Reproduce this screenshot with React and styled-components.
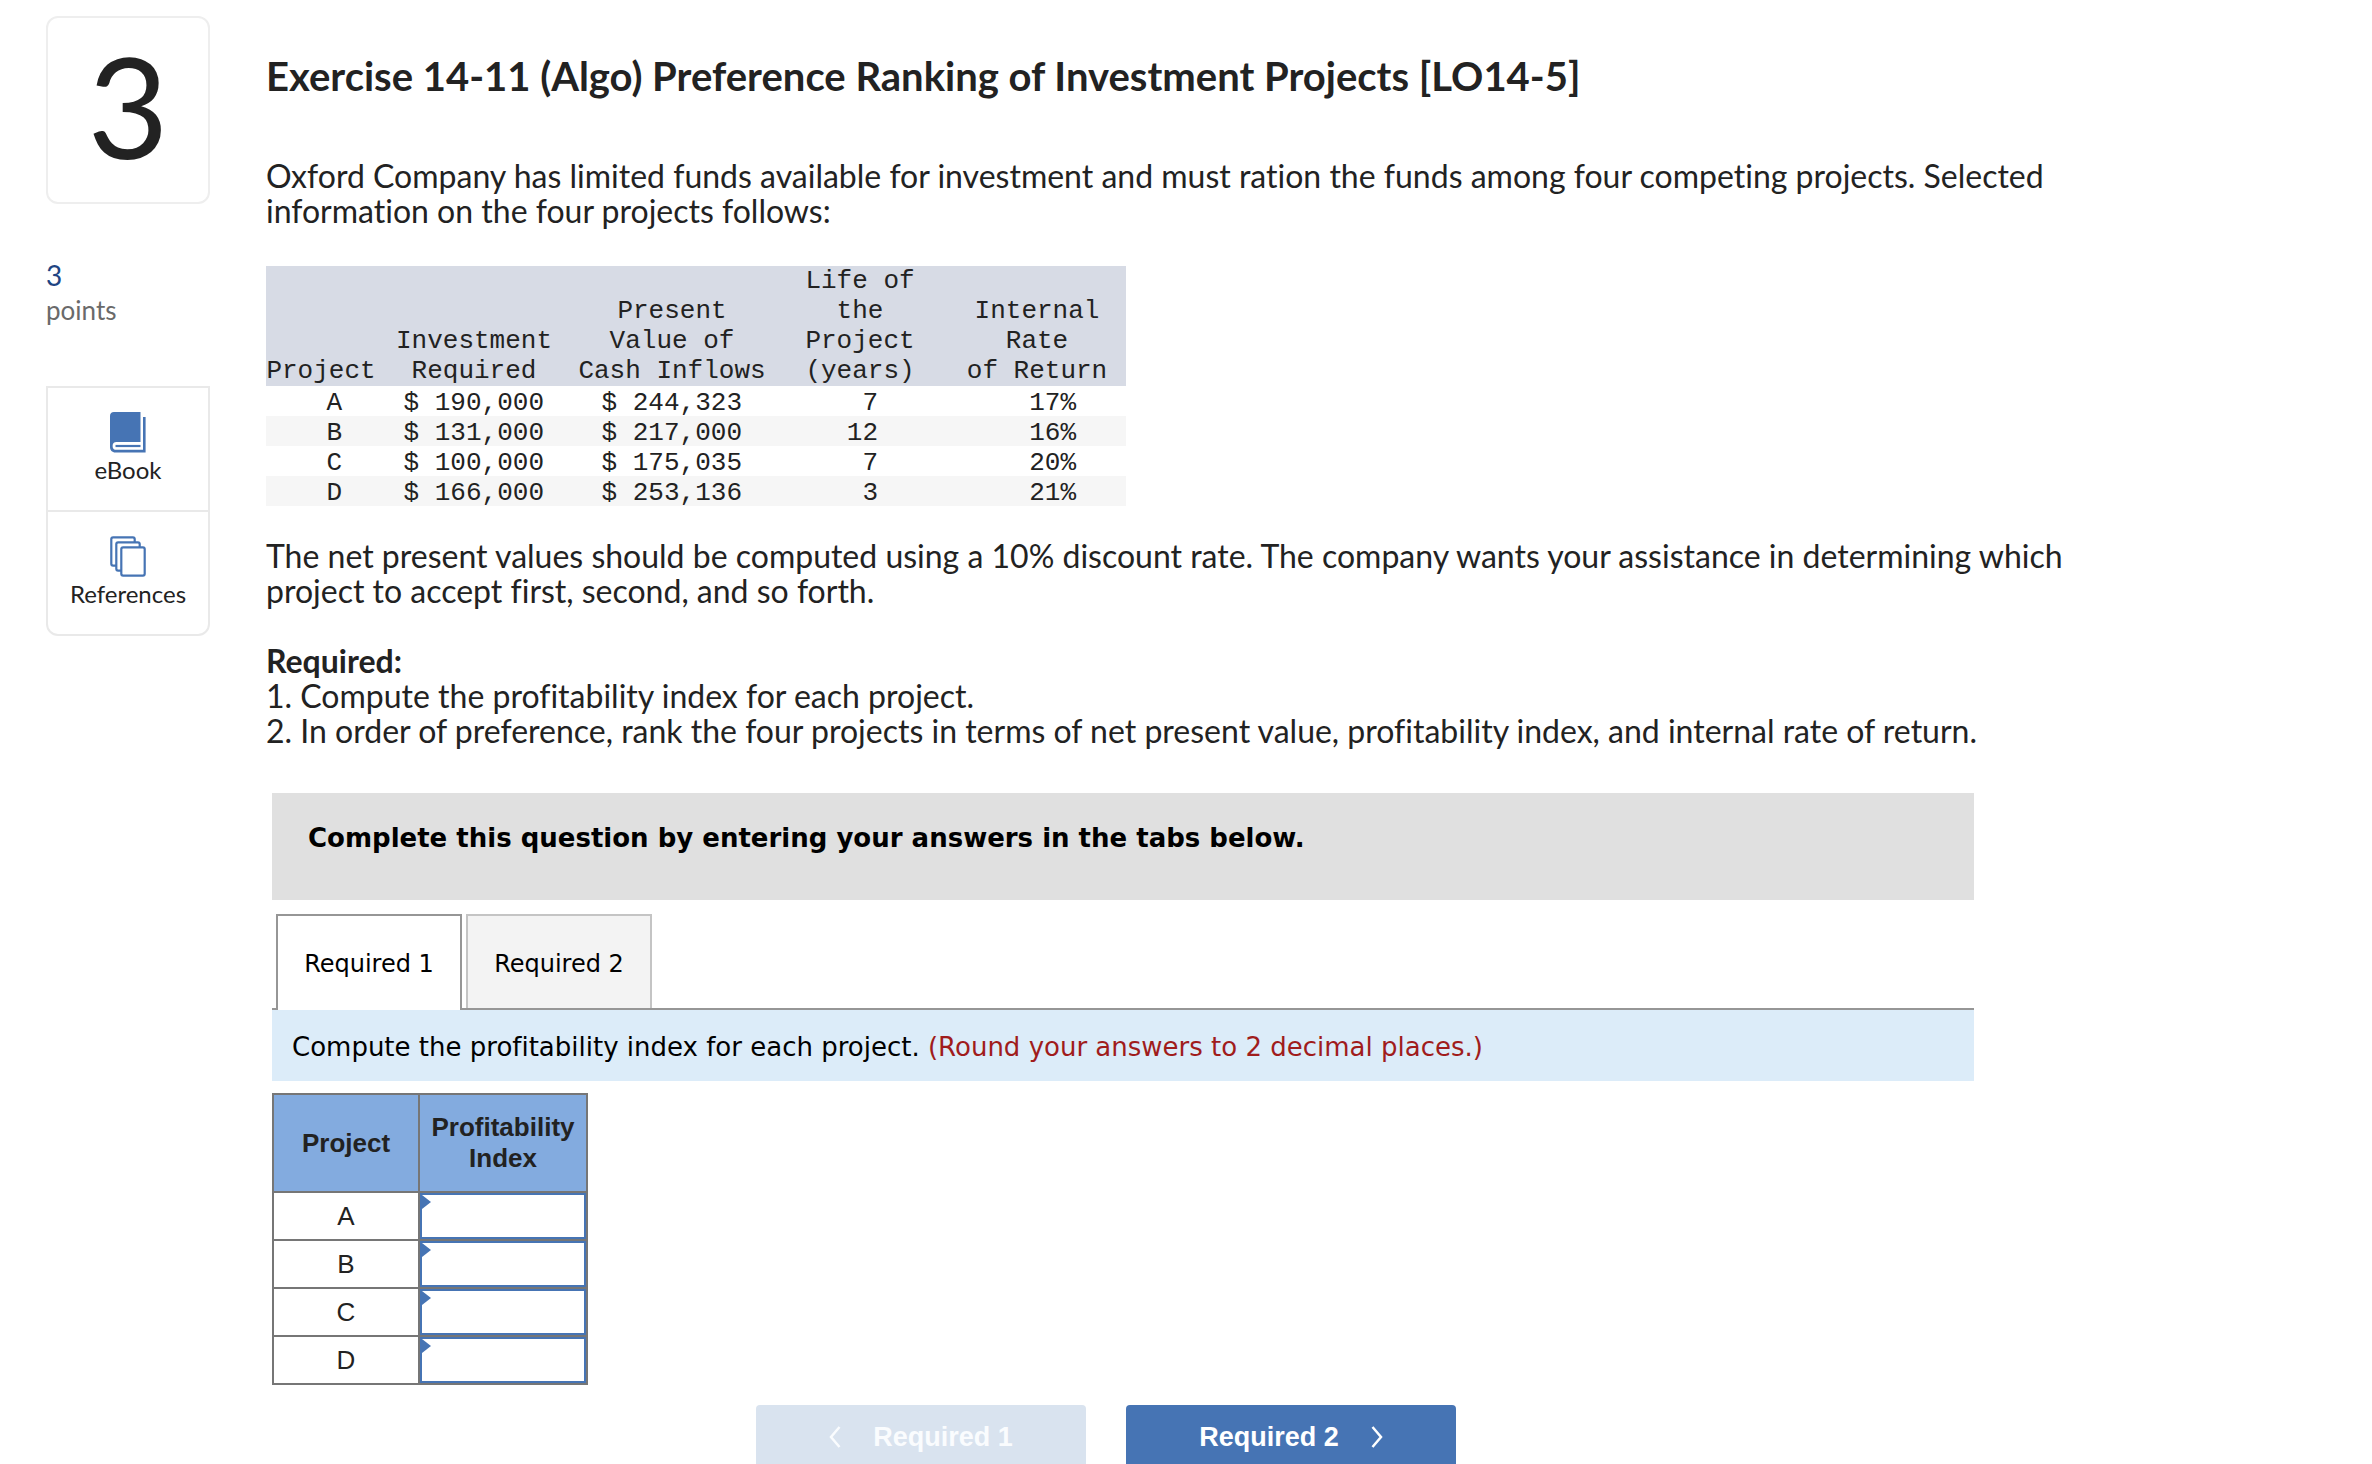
import React, { useState } from 'react'
import styled, { createGlobalStyle } from 'styled-components'

const GlobalStyle = createGlobalStyle`
* { box-sizing: border-box; }
html { scrollbar-width: none; }
body {
  margin: 0;
  background: #fff;
  color: #222;
  font-family: Lato, sans-serif;
  font-variant-ligatures: none;
}
`

const Page = styled.div`
display: flex;
align-items: flex-start;
gap: 56px;
padding: 16px 292px 0 46px;
`

/* left side */
const Sidebar = styled.aside`
flex: 0 0 164px;
`
const QuestionNumber = styled.div`
display: flex;
align-items: center;
justify-content: center;
height: 188px;
padding-bottom: 10px;
border: 2px solid #eee;
border-radius: 12px;
font-size: 140px;
line-height: 160px;
`
const Points = styled.div`
margin: 54px 0 58px;
line-height: 35px;
`
const PointsValue = styled.div`
font-size: 28px;
color: #1f4583;
`
const PointsLabel = styled.div`
font-size: 26px;
color: #6a6a6a;
`
const Tools = styled.div`
border: 2px solid #e9e9e9;
border-radius: 0 0 12px 12px;
`
const ToolButton = styled.button`
display: flex;
flex-direction: column;
align-items: center;
gap: 3px;
width: 100%;
height: 122px;
padding: 24px 0 0;
border: 0;
background: none;
color: #222;
font-family: inherit;
font-size: 24px;
line-height: 28px;
cursor: pointer;
& + & {
  height: 124px;
  border-top: 2px solid #e9e9e9;
}
`

/* question text */
const Main = styled.main`
flex: 1;
min-width: 0;
padding-top: 40px;
`
const Title = styled.h1`
margin: 0 0 62px;
font-size: 40px;
line-height: 40px;
font-weight: 700;
`
const Text = styled.p`
margin: 0 0 35px;
font-size: 32px;
line-height: 35px;
`
const ProjectTable = styled.table`
width: 860px;
margin: 38px 0 32px;
border-collapse: collapse;
table-layout: fixed;
font-family: 'Liberation Mono', monospace;
font-size: 26px;
th {
  padding: 0;
  background: #d7dbe5;
  font-weight: 400;
  line-height: 30px;
  vertical-align: bottom;
  white-space: nowrap;
}
tbody tr:nth-child(even) {
  background: #f6f6f6;
}
`
const Cell = styled.td`
padding: 4px ${props => props.$right}px 0 0;
line-height: 26px;
text-align: right;
white-space: nowrap;
`

/* answer area */
const Panel = styled.section`
margin: 45px 106px 0 6px;
font-family: 'DejaVu Sans', Verdana, sans-serif;
color: #000;
`
const Notice = styled.div`
padding: 30px 36px 47px;
background: #e0e0e0;
font-size: 26px;
font-weight: 700;
line-height: 30px;
`
const Tabs = styled.div`
display: flex;
gap: 4px;
margin-top: 14px;
padding-left: 4px;
border-bottom: 2px solid #969696;
`
const Tab = styled.button`
width: 186px;
height: ${props => (props.$active ? 96 : 94)}px;
margin-bottom: ${props => (props.$active ? -2 : 0)}px;
padding: ${props => (props.$active ? '2px 0 0' : '4px 0 0')};
border: 2px solid ${props => (props.$active ? '#969696' : '#c4c4c4')};
border-bottom: 0;
background: ${props => (props.$active ? '#fff' : '#f3f3f3')};
color: #000;
font-family: inherit;
font-size: 24px;
line-height: 30px;
cursor: pointer;
`
const Instruction = styled.div`
padding: 22px 20px 19px;
background: #dcecf9;
font-size: 26px;
line-height: 30px;
`
const Hint = styled.span`
color: #a01c1c;
`
const AnswerTable = styled.table`
width: 316px;
margin-top: 12px;
border-collapse: collapse;
table-layout: fixed;
font-family: 'Liberation Sans', Arial, sans-serif;
font-size: 26px;
line-height: 31px;
color: #222;
th, td {
  height: 48px;
  padding: 0;
  border: 2px solid #767676;
  font-weight: 400;
  text-align: center;
}
thead th {
  height: 98px;
  background: #83abdf;
  font-weight: 700;
}
`
const Answer = styled.div`
position: relative;
height: 46px;
&::before {
  content: '';
  position: absolute;
  top: 2px;
  left: 2px;
  border: solid transparent;
  border-width: 7px 0 7px 9px;
  border-left-color: #4674b4;
}
`
const AnswerInput = styled.input`
display: block;
width: 100%;
height: 100%;
padding: 0 12px;
border: 2px solid #4674b4;
border-radius: 0;
background: #fff;
font: inherit;
text-align: right;
outline: none;
`
const Pager = styled.div`
display: flex;
justify-content: center;
gap: 40px;
margin-top: 20px;
padding-right: 34px;
`
const PagerButton = styled.button`
display: flex;
align-items: center;
justify-content: center;
gap: 32px;
width: 330px;
height: 64px;
padding: 0;
border: 0;
border-radius: 4px;
background: #4674b4;
color: #fff;
font-family: 'Liberation Sans', Arial, sans-serif;
font-size: 27px;
font-weight: 700;
cursor: pointer;
&:disabled {
  background: #d9e3ef;
  color: #fafcfe;
  cursor: default;
}
`

const BookIcon = () => (
  <svg width="36" height="41" viewBox="0 0 36 41" aria-hidden="true">
    <path fill="#4674b4" fillRule="evenodd" d="M4 0H30.5V30H6.5A3.8 3.8 0 0 0 6.5 37.8H33V5H35.6V40.5H5.5C2 40.5 0 38 0 35V4C0 1.500 1.500 0 4 0Z" />
    <path stroke="#4674b4" strokeWidth="2.200" d="M5.500 34H30.500" />
  </svg>
)

const PagesIcon = () => (
  <svg width="36" height="41" viewBox="0 0 36 41" fill="#fff" stroke="#4674b4" strokeWidth="2.200" aria-hidden="true">
    <rect x="1.300" y="1.300" width="23.400" height="28.300" rx="1.800" />
    <rect x="6.300" y="6.300" width="23.400" height="28.300" rx="1.800" />
    <rect x="11.300" y="11.300" width="23.400" height="28.300" rx="1.800" />
  </svg>
)

const Chevron = ({ left }) => (
  <svg width="12" height="22" viewBox="0 0 12 22" fill="none" stroke="currentColor" strokeWidth="2.500" aria-hidden="true">
    <path d={left ? 'M10.500 1L2 11L10.500 21' : 'M1.500 1L10 11L1.500 21'} />
  </svg>
)

const projects = [
  { name: 'A', investment: '$ 190,000', inflows: '$ 244,323', life: 7, irr: '17%' },
  { name: 'B', investment: '$ 131,000', inflows: '$ 217,000', life: 12, irr: '16%' },
  { name: 'C', investment: '$ 100,000', inflows: '$ 175,035', life: 7, irr: '20%' },
  { name: 'D', investment: '$ 166,000', inflows: '$ 253,136', life: 3, irr: '21%' },
]

const App = () => {
  const [tab, setTab] = useState(1)

  return (
    <>
      <GlobalStyle />
      <Page>
        <Sidebar>
          <QuestionNumber>3</QuestionNumber>
          <Points>
            <PointsValue>3</PointsValue>
            <PointsLabel>points</PointsLabel>
          </Points>
          <Tools>
            <ToolButton type="button"><BookIcon />eBook</ToolButton>
            <ToolButton type="button"><PagesIcon />References</ToolButton>
          </Tools>
        </Sidebar>
        <Main>
          <Title>Exercise 14-11 (Algo) Preference Ranking of Investment Projects [LO14-5]</Title>
          <Text>
            Oxford Company has limited funds available for investment and must ration the funds among four competing projects. Selected information on the four projects follows:
          </Text>
          <ProjectTable>
            <colgroup>
              <col width="110" />
              <col width="196" />
              <col width="200" />
              <col width="176" />
              <col width="178" />
            </colgroup>
            <thead>
              <tr>
                <th scope="col">Project</th>
                <th scope="col">Investment<br />Required</th>
                <th scope="col">Present<br />Value of<br />Cash Inflows</th>
                <th scope="col">Life of<br />the<br />Project<br />(years)</th>
                <th scope="col">Internal<br />Rate<br />of Return</th>
              </tr>
            </thead>
            <tbody>
              {projects.map(p => (
                <tr key={p.name}>
                  <Cell $right={34}>{p.name}</Cell>
                  <Cell $right={28}>{p.investment}</Cell>
                  <Cell $right={30}>{p.inflows}</Cell>
                  <Cell $right={70}>{p.life}</Cell>
                  <Cell $right={50}>{p.irr}</Cell>
                </tr>
              ))}
            </tbody>
          </ProjectTable>
          <Text>
            The net present values should be computed using a 10% discount rate. The company wants your assistance in determining which project to accept first, second, and so forth.
          </Text>
          <Text>
            <b>Required:</b><br />
            1. Compute the profitability index for each project.<br />
            2. In order of preference, rank the four projects in terms of net present value, profitability index, and internal rate of return.
          </Text>
          <Panel>
            <Notice>Complete this question by entering your answers in the tabs below.</Notice>
            <Tabs role="tablist">
              {[1, 2].map(n => (
                <Tab key={n} type="button" role="tab" aria-selected={tab === n} $active={tab === n} onClick={() => setTab(n)}>
                  Required {n}
                </Tab>
              ))}
            </Tabs>
            <Instruction>
              Compute the profitability index for each project. <Hint>(Round your answers to 2 decimal places.)</Hint>
            </Instruction>
            <AnswerTable>
              <colgroup>
                <col width="146" />
                <col width="168" />
              </colgroup>
              <thead>
                <tr>
                  <th scope="col">Project</th>
                  <th scope="col">Profitability<br />Index</th>
                </tr>
              </thead>
              <tbody>
                {projects.map(p => (
                  <tr key={p.name}>
                    <th scope="row"><label htmlFor={`index-${p.name}`}>{p.name}</label></th>
                    <td>
                      <Answer>
                        <AnswerInput id={`index-${p.name}`} type="text" />
                      </Answer>
                    </td>
                  </tr>
                ))}
              </tbody>
            </AnswerTable>
            <Pager>
              <PagerButton type="button" disabled={tab === 1} onClick={() => setTab(1)}>
                <Chevron left />Required 1
              </PagerButton>
              <PagerButton type="button" disabled={tab === 2} onClick={() => setTab(2)}>
                Required 2<Chevron />
              </PagerButton>
            </Pager>
          </Panel>
        </Main>
      </Page>
    </>
  )
}

export default App
